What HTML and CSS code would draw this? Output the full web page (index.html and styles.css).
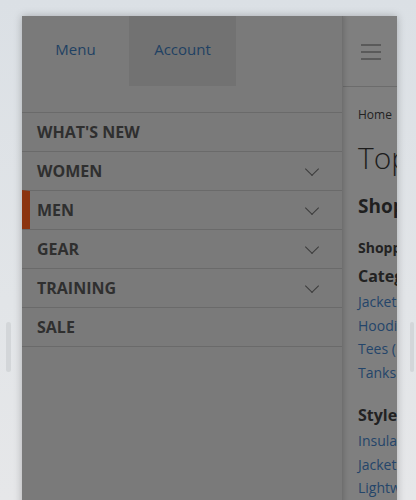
FILE: index.html
```html
<!DOCTYPE html>
<html lang="en">
<head>
  <meta charset="UTF-8">
  <meta name="viewport" content="width=device-width, initial-scale=1.0">
  <title>Tops - Men</title>
  <link rel="stylesheet" href="styles.css">
</head>
<body>
  <div class="stage">
    <div class="side-bar left"></div>
    <div class="device">
      <nav class="nav-panel">
        <div class="tabs">
          <a href="#" class="tab">Menu</a>
          <a href="#" class="tab active">Account</a>
        </div>
        <ul class="nav-list">
          <li><a href="#">What's New</a></li>
          <li class="has-sub"><a href="#">Women</a><span class="chev"></span></li>
          <li class="has-sub current"><a href="#">Men</a><span class="chev"></span></li>
          <li class="has-sub"><a href="#">Gear</a><span class="chev"></span></li>
          <li class="has-sub"><a href="#">Training</a><span class="chev"></span></li>
          <li><a href="#">Sale</a></li>
        </ul>
      </nav>
      <main class="page">
        <header class="page-header">
          <span class="burger"><i></i><i></i><i></i></span>
        </header>
        <div class="page-body">
          <div class="crumbs">Home<span class="sep">&gt;</span>Men<span class="sep">&gt;</span>Tops</div>
          <h1 class="title">Tops</h1>
          <h2 class="shop-by">Shop By</h2>
          <div class="opts">Shopping Options</div>
          <div class="filter-title">Category</div>
          <ul class="filter">
            <li><a href="#">Jackets (11)</a></li>
            <li><a href="#">Hoodies &amp; Sweatshirts (13)</a></li>
            <li><a href="#">Tees (12)</a></li>
            <li><a href="#">Tanks (12)</a></li>
          </ul>
          <div class="filter-title style">Style</div>
          <ul class="filter">
            <li><a href="#">Insulated (6)</a></li>
            <li><a href="#">Jacket (11)</a></li>
            <li><a href="#">Lightweight (9)</a></li>
          </ul>
        </div>
      </main>
    </div>
    <div class="side-bar right"></div>
  </div>
</body>
</html>
```

FILE: styles.css
```css
/* backdrop round the device window */
body {
  margin: 0;
  height: 500px;
  overflow: hidden;
  font-family: "Open Sans", "Liberation Sans", Arial, sans-serif;
  background: linear-gradient(180deg, #dbe0e5 0%, #e2e5e8 60%, #e6e7e9 100%);
}
.stage {
  display: flex;
  align-items: flex-start;
  padding-top: 16px;
}
.side-bar {
  width: 5px;
  height: 50px;
  margin-top: 306px;
  border-radius: 3px;
  background: #d3d6d9;
}
.side-bar.left { margin-left: 6px; margin-right: 11px; }
.side-bar.right { margin-left: 13px; width: 4px; }

.device {
  display: flex;
  width: 375px;
  height: 500px;
  overflow: hidden;
  box-shadow: 0 0 8px rgba(0,0,0,0.25);
}

/* left off-canvas menu */
.nav-panel {
  width: 320px;
  flex: none;
  background: #7a7a7a;
  border-right: 1px solid #6f6f6f;
  box-shadow: 2px 0 4px rgba(0,0,0,0.12);
  position: relative;
  z-index: 1;
}
.tabs {
  display: flex;
  height: 70px;
  margin-bottom: 26px;
}
.tab {
  width: 107px;
  display: flex;
  align-items: center;
  justify-content: center;
  font-size: 15px;
  color: #1f4163;
  text-decoration: none;
  padding-bottom: 5px;
  box-sizing: border-box;
}
.tab.active { background: #727272; }

.nav-list {
  list-style: none;
  margin: 0;
  padding: 0;
  border-bottom: 1px solid #6a6a6a;
}
.nav-list li {
  display: flex;
  align-items: center;
  justify-content: space-between;
  height: 38px;
  border-top: 1px solid #6a6a6a;
  padding: 0 22px 0 15px;
}
.nav-list li.current {
  border-left: 8px solid #8c3510;
  padding-left: 7px;
}
.nav-list a {
  font-size: 16px;
  font-weight: 700;
  text-transform: uppercase;
  color: #2f2f2f;
  text-decoration: none;
}
.chev {
  width: 9px;
  height: 9px;
  border-right: 1.5px solid #3b3b3b;
  border-bottom: 1.5px solid #3b3b3b;
  transform: rotate(45deg);
  margin: 0 3px 4px 0;
}

/* page behind the menu */
.page {
  flex: 1;
  min-width: 0;
  background: #7f7f7f;
  overflow: hidden;
  white-space: nowrap;
}
.page-header {
  height: 70px;
  border-bottom: 1px solid #6c6c6c;
  display: flex;
  align-items: center;
  padding-left: 18px;
}
.burger {
  display: flex;
  flex-direction: column;
  gap: 5px;
  width: 20px;
  margin-top: 1px;
}
.burger i {
  display: block;
  height: 2px;
  background: #5a5a5a;
}
.page-body {
  padding: 0 0 0 15px;
  color: #222;
}
.crumbs {
  font-size: 12px;
  margin-top: 20px;
  line-height: 16px;
}
.sep { margin: 0 10px; }
.title {
  font-size: 30px;
  font-weight: 300;
  margin: 15px 0 0;
  line-height: 40px;
  color: #1c1c1c;
}
.shop-by {
  font-size: 19px;
  font-weight: 700;
  margin: 13px 0 0;
  line-height: 30px;
  color: #1f1f1f;
}
.opts {
  font-size: 14px;
  font-weight: 700;
  margin-top: 17px;
  line-height: 20px;
}
.filter-title {
  font-size: 16px;
  font-weight: 700;
  margin-top: 7px;
  line-height: 22px;
}
.filter-title.style { margin-top: 20px; }
.filter {
  list-style: none;
  margin: 3px 0 0;
  padding: 0;
}
.filter li {
  font-size: 14px;
  line-height: 23.5px;
}
.filter a {
  color: #24456a;
  text-decoration: none;
}
```
